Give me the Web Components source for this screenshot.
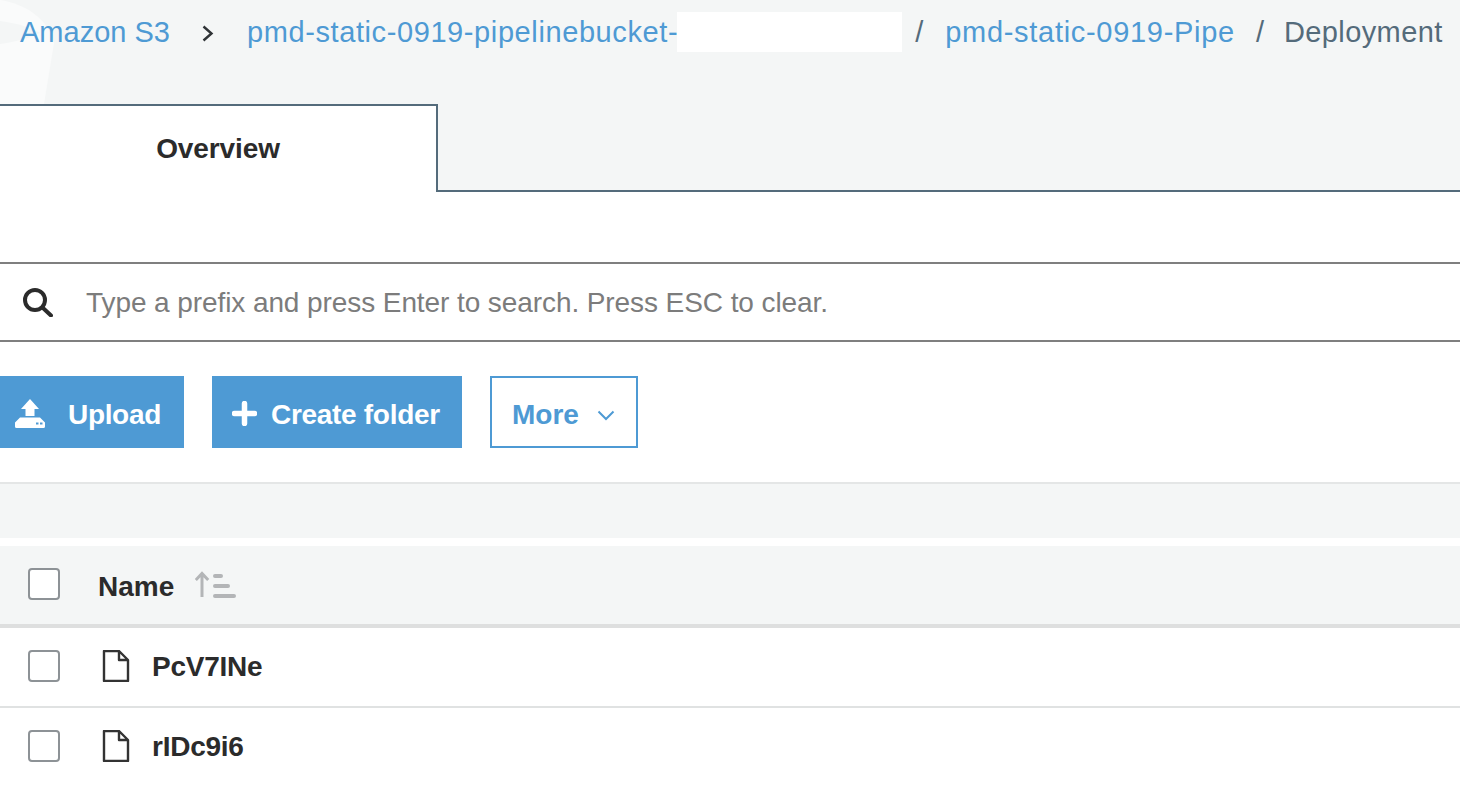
<!DOCTYPE html>
<html><head><meta charset="utf-8"><style>
html,body{margin:0;padding:0;background:#fff;height:788px;overflow:hidden}
body{font-family:"Liberation Sans",Arial,sans-serif;font-size:28px;color:#2b2b2b}
</style></head><body>
<s3-crumbs></s3-crumbs>
<s3-tabs></s3-tabs>
<s3-search></s3-search>
<s3-actions></s3-actions>
<s3-table></s3-table>
<script>
function def(name,html){customElements.define(name,class extends HTMLElement{constructor(){super();this.attachShadow({mode:'open'}).innerHTML=html;}});}
def('s3-crumbs',`<style>
:host{display:flex;align-items:flex-start;height:104px;background:#f4f6f6;position:relative;overflow:hidden;padding:0 0 0 20px;box-sizing:border-box;white-space:nowrap;font-size:29px;line-height:40px;color:#546b7b}
.w{position:absolute;left:0;top:0}
.row{display:flex;align-items:center;height:64px;position:relative}
a{color:#4e9ad4;text-decoration:none}
.chev{margin:2px 33px 0 32px;display:block;flex:none}
.mask{width:225px;height:40px;background:#fff;margin-left:-1px;flex:none}
.lk{letter-spacing:.6px}
.lk2{letter-spacing:.7px}
.d{letter-spacing:.4px}
</style>
<svg class="w" width="60" height="104"><path d="M0 0C25 4 48 18 54 43L44 104H0Z" fill="#fafbfb"/><path d="M0 21C18 23 34 29 40 33C30 38 14 42 0 44Z" fill="#f4f6f6"/></svg>
<div class="row"><a href="#">Amazon S3</a>
<svg class="chev" width="12" height="17" viewBox="0 0 12 17"><path d="M1.500 1.500L9.500 8.500L1.500 15.500" fill="none" stroke="#2f3336" stroke-width="2.400"/></svg>
<a class="lk" href="#">pmd-static-0919-pipelinebucket-</a><span class="mask"></span>
<span class="sl" style="margin-left:13px">/</span><a class="lk2" href="#" style="margin-left:22px">pmd-static-0919-Pipe</a>
<span class="sl" style="margin-left:21px">/</span><span class="d" style="margin-left:20px">Deployment</span></div>`);
def('s3-tabs',`<style>
:host{display:flex;height:88px;background:#f4f6f6;align-items:stretch;box-sizing:border-box}
.tab{width:438px;box-sizing:border-box;background:#fff;border-top:2px solid #546b7b;border-right:2px solid #546b7b;display:flex;align-items:center;justify-content:center;font-weight:700;font-size:28px;color:#2b2b2b;padding-bottom:1px;letter-spacing:-.1px}
.rest{flex:1;border-bottom:2px solid #546b7b}
</style><div class="tab">Overview</div><div class="rest"></div>`);
def('s3-search',`<style>
:host{display:flex;align-items:center;margin-top:70px;height:80px;box-sizing:border-box;border-top:2px solid #7f7f7f;border-bottom:2px solid #7f7f7f;padding-left:23px;gap:33px;font-size:28px;color:#7c7c7c;letter-spacing:-.085px}
svg{display:block;flex:none}
span{padding-top:1px}
</style><svg width="30" height="30" viewBox="0 0 30 30"><circle cx="12" cy="13" r="10" fill="none" stroke="#2b2b2b" stroke-width="4"/><path d="M20 21L28 28.500" stroke="#2b2b2b" stroke-width="4" stroke-linecap="round"/></svg><span>Type a prefix and press Enter to search. Press ESC to clear.</span>`);
def('s3-btn',`<style>
:host{display:inline-flex;align-items:center;height:72px;box-sizing:border-box;background:#4e9ad4;color:#fff;font-weight:700;font-size:28px;white-space:nowrap}
:host([outline]){background:#fff;border:2px solid #4e9ad4;color:#4e9ad4}
</style><slot></slot>`);
def('s3-actions',`<style>
:host{display:flex;gap:28px;margin-top:34px;height:72px}
svg{display:block;flex:none}
span{padding-top:6px}
</style>
<s3-btn style="width:184px;padding-left:15px;gap:23px;box-sizing:border-box"><svg style="margin-top:3px" width="30" height="29" viewBox="0 0 30 29"><path d="M15 0L24 10H19.500V17H10.500V10H6Z" fill="#fff"/><path fill-rule="evenodd" d="M5 18.500H25L30 23.500V27.500A1.500 1.500 0 0 1 28.500 29H1.500A1.500 1.500 0 0 1 0 27.500V23.500ZM21 23.500V25.500H23.500V23.500ZM25 23.500V25.500H27.500V23.500Z" fill="#fff"/></svg><span style="letter-spacing:-.33px">Upload</span></s3-btn>
<s3-btn style="width:250px;padding-left:20px;gap:14px;box-sizing:border-box"><svg style="margin-top:2px" width="25" height="25" viewBox="0 0 25 25"><path d="M12.500 2.500V22.500M2.500 12.500H22.500" stroke="#fff" stroke-width="5.500" stroke-linecap="round"/></svg><span style="letter-spacing:-.3px">Create folder</span></s3-btn>
<s3-btn outline style="width:148px;padding-left:20px;gap:18px;box-sizing:border-box"><span>More</span><svg style="margin-top:7px" width="18" height="11" viewBox="0 0 18 11"><path d="M1.500 1.500L9 9L16.500 1.500" fill="none" stroke="#4e9ad4" stroke-width="2"/></svg></s3-btn>`);
def('s3-check',`<style>
:host{display:block;width:32px;height:32px;box-sizing:border-box;border:2px solid #8d9296;border-radius:4px;background:#fff;flex:none}
</style>`);
def('s3-row',`<style>
:host{display:flex;align-items:center;height:80px;box-sizing:border-box;padding-left:28px;font-weight:700;font-size:28px;color:#2b2b2b;letter-spacing:-.25px}
s3-check{margin-right:42px;margin-top:-2px}
svg{display:block;flex:none;margin-right:22px;margin-top:-2px}
</style><s3-check></s3-check><svg width="28" height="32" viewBox="0 0 28 32"><path d="M2 1H17L26 10V31H2Z M17 1V10H26" fill="none" stroke="#333" stroke-width="2.400" stroke-linejoin="round"/></svg><slot></slot>`);
def('s3-table',`<style>
:host{display:block;margin-top:34px;border-top:2px solid #e4e6e6}
.band{height:54px;background:#f4f6f6}
.gap{height:8px;background:#fff}
.head{display:flex;align-items:center;height:82px;box-sizing:border-box;background:#f4f6f6;border-bottom:4px solid #dedfdf;padding:0 0 0 28px;font-weight:700;font-size:28px;color:#2b2b2b}
.head s3-check{margin-right:38px;margin-top:-2px}
.head span{margin-top:4px}
.head svg{display:block;margin-left:21px}
.r1{border-bottom:2px solid #e0e2e2}
.r2{height:78px}
</style><div class="band"></div><div class="gap"></div>
<div class="head"><s3-check></s3-check><span>Name</span><svg width="42" height="28" viewBox="0 0 42 28"><path d="M7 26V2.500M.8 9L7 2.500L13.200 9" fill="none" stroke="#b3b5b7" stroke-width="3"/><path d="M20 5H26M20 15H33M20 25H39" stroke="#b3b5b7" stroke-width="4" stroke-linecap="round"/></svg></div>
<s3-row class="r1">PcV7INe</s3-row><s3-row class="r2">rIDc9i6</s3-row>`);
</script></body></html>
